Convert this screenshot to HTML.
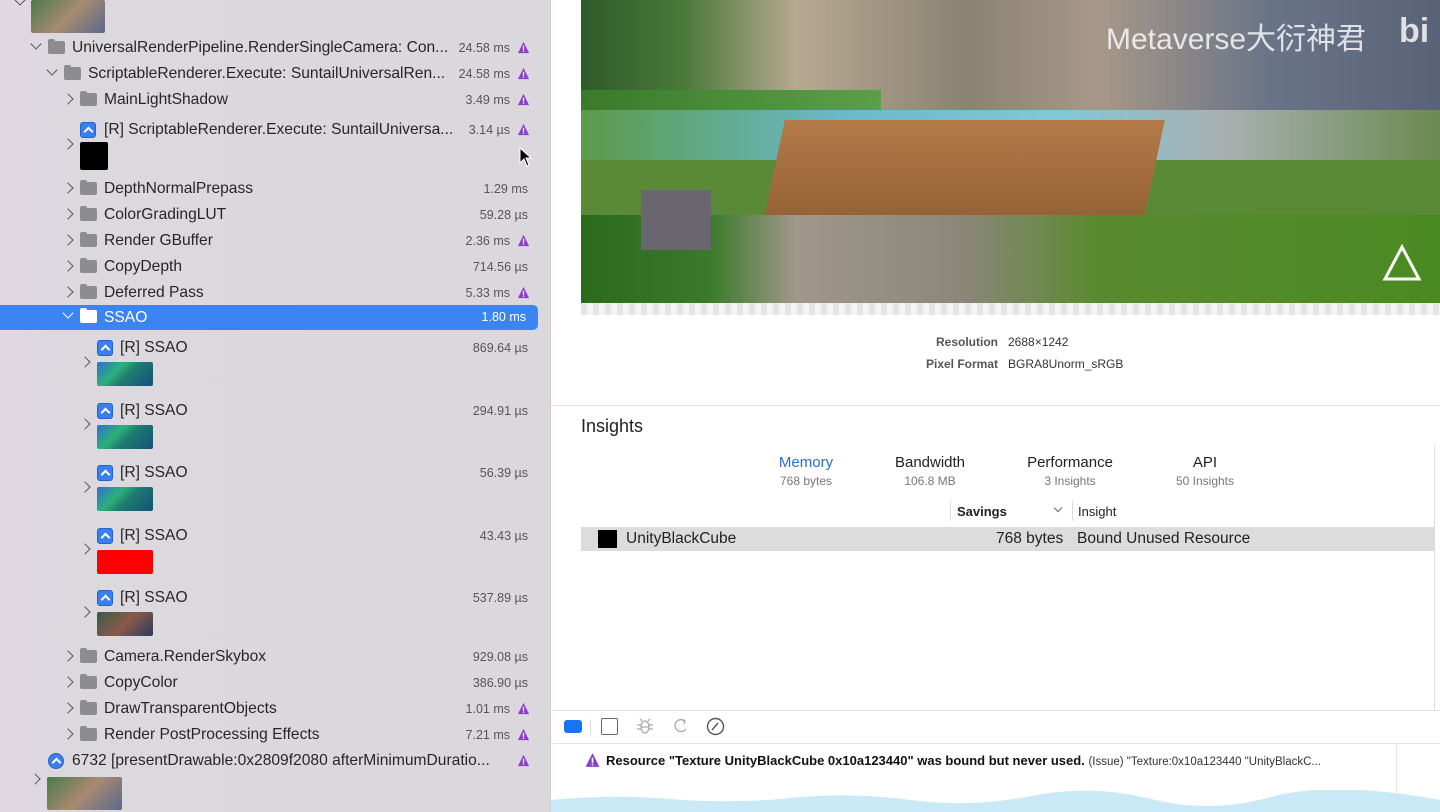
<!DOCTYPE html>
<html><head><meta charset="utf-8"><style>
*{margin:0;padding:0;box-sizing:border-box}
body{width:1440px;height:812px;overflow:hidden;position:relative;font-family:"Liberation Sans",sans-serif;background:#fff}
#side{position:absolute;left:0;top:0;width:551px;height:812px;background:linear-gradient(90deg,#e2d6e2 0px,#dcd9de 60px,#dad8dc 100%);border-right:1px solid #cfcdd1}
.r{position:absolute;left:0;height:24px;width:540px;font-size:15.6px;color:#262626;line-height:24px;white-space:nowrap;margin-top:1px}
.r .t{position:absolute;top:0}
.r .tm{position:absolute;font-size:12.5px;color:#555;right:30px;top:0}
.r .tm.nw{right:12px}
.w{position:absolute;right:10px;top:5px;width:13px;height:13px}
.ch{position:absolute;top:7px;width:8px;height:8px;border-right:1.6px solid #555;border-bottom:1.6px solid #555}
.ch.d{transform:rotate(45deg);top:4px}
.ch.rt{transform:rotate(-45deg)}
.fo{position:absolute;top:5px;width:17px;height:13px;background:#8d8c90;border-radius:2px}
.fo:before{content:"";position:absolute;left:0;top:-2px;width:7px;height:4px;background:#8d8c90;border-radius:2px 2px 0 0}
.ri{position:absolute;top:4px;width:16px;height:16px;background:#3a7ff0;border-radius:3px;border:1px solid #2762c9}
.ri:after{content:"";position:absolute;left:4px;top:5px;width:5px;height:5px;border-left:2px solid #fff;border-top:2px solid #fff;transform:rotate(45deg)}
.th{position:absolute;width:56px;height:24px;border-radius:2px}
.ssao{background:linear-gradient(135deg,#2f6fd0,#2db07a 35%,#1f7b6f 55%,#14507a)}
.sel{background:#3b84f2;color:#fff;border-radius:0 5px 5px 0}
.sel .tm{color:#fff}
.sel .ch{border-color:#fff}.sel .fo,.sel .fo:before{background:#fff}
#game{position:absolute;left:581px;top:0;width:859px;height:303px;background:#5a8a38;overflow:hidden}
#chk{position:absolute;left:581px;top:303px;width:859px;height:12px;background:repeating-linear-gradient(90deg,#e4e4e4 0 6px,#f4f4f4 6px 12px)}
.lbl{position:absolute;font-size:12px;color:#333}
</style></head><body>
<div id="side">
<div class="th" style="left:31px;top:0;width:74px;height:33px;background:linear-gradient(135deg,#4a7a4a,#a88a70 50%,#5b6a8a)"></div>
<div class="ch d" style="left:16px;top:-4px;position:absolute"></div>

<div class="r" style="top:35px"><span class="ch d" style="left:32px"></span><span class="fo" style="left:48px"></span><span class="t" style="left:72px">UniversalRenderPipeline.RenderSingleCamera: Con...</span><span class="tm">24.58 ms</span><svg class="w" viewBox="0 0 14 14"><path d="M7 1L13 13H1Z" fill="#8b3fc4"/><rect x="6.3" y="5" width="1.4" height="4.5" fill="#fff"/><rect x="6.3" y="10.3" width="1.4" height="1.4" fill="#fff"/></svg></div>
<div class="r" style="top:61px"><span class="ch d" style="left:48px"></span><span class="fo" style="left:64px"></span><span class="t" style="left:88px">ScriptableRenderer.Execute: SuntailUniversalRen...</span><span class="tm">24.58 ms</span><svg class="w" viewBox="0 0 14 14"><path d="M7 1L13 13H1Z" fill="#8b3fc4"/><rect x="6.3" y="5" width="1.4" height="4.5" fill="#fff"/><rect x="6.3" y="10.3" width="1.4" height="1.4" fill="#fff"/></svg></div>
<div class="r" style="top:87px"><span class="ch rt" style="left:64px"></span><span class="fo" style="left:80px"></span><span class="t" style="left:104px">MainLightShadow</span><span class="tm">3.49 ms</span><svg class="w" viewBox="0 0 14 14"><path d="M7 1L13 13H1Z" fill="#8b3fc4"/><rect x="6.3" y="5" width="1.4" height="4.5" fill="#fff"/><rect x="6.3" y="10.3" width="1.4" height="1.4" fill="#fff"/></svg></div>
<div class="r" style="top:117px"><span class="ri" style="left:80px"></span><span class="t" style="left:104px">[R] ScriptableRenderer.Execute: SuntailUniversa...</span><span class="tm">3.14 µs</span><svg class="w" viewBox="0 0 14 14"><path d="M7 1L13 13H1Z" fill="#8b3fc4"/><rect x="6.3" y="5" width="1.4" height="4.5" fill="#fff"/><rect x="6.3" y="10.3" width="1.4" height="1.4" fill="#fff"/></svg></div>
<div class="ch rt" style="position:absolute;left:64px;top:140px"></div>
<div class="th" style="left:80px;top:142px;width:28px;height:28px;background:#000"></div>
<svg style="position:absolute;left:519px;top:147px" width="14" height="20" viewBox="0 0 14 20"><path d="M1 1V16L5 12L8 19L10 18L7 11H12Z" fill="#000" stroke="#fff" stroke-width="1"/></svg>

<div class="r" style="top:176px"><span class="ch rt" style="left:64px"></span><span class="fo" style="left:80px"></span><span class="t" style="left:104px">DepthNormalPrepass</span><span class="tm nw">1.29 ms</span></div>
<div class="r" style="top:202px"><span class="ch rt" style="left:64px"></span><span class="fo" style="left:80px"></span><span class="t" style="left:104px">ColorGradingLUT</span><span class="tm nw">59.28 µs</span></div>
<div class="r" style="top:228px"><span class="ch rt" style="left:64px"></span><span class="fo" style="left:80px"></span><span class="t" style="left:104px">Render GBuffer</span><span class="tm">2.36 ms</span><svg class="w" viewBox="0 0 14 14"><path d="M7 1L13 13H1Z" fill="#8b3fc4"/><rect x="6.3" y="5" width="1.4" height="4.5" fill="#fff"/><rect x="6.3" y="10.3" width="1.4" height="1.4" fill="#fff"/></svg></div>
<div class="r" style="top:254px"><span class="ch rt" style="left:64px"></span><span class="fo" style="left:80px"></span><span class="t" style="left:104px">CopyDepth</span><span class="tm nw">714.56 µs</span></div>
<div class="r" style="top:280px"><span class="ch rt" style="left:64px"></span><span class="fo" style="left:80px"></span><span class="t" style="left:104px">Deferred Pass</span><span class="tm">5.33 ms</span><svg class="w" viewBox="0 0 14 14"><path d="M7 1L13 13H1Z" fill="#8b3fc4"/><rect x="6.3" y="5" width="1.4" height="4.5" fill="#fff"/><rect x="6.3" y="10.3" width="1.4" height="1.4" fill="#fff"/></svg></div>
<div class="r sel" style="top:305px;height:25px;width:538px;line-height:25px;margin-top:0"><span class="ch d" style="left:64px"></span><span class="fo" style="left:80px"></span><span class="t" style="left:104px">SSAO</span><span class="tm nw">1.80 ms</span></div>

<div class="r" style="top:335px"><span class="ri" style="left:97px"></span><span class="t" style="left:120px">[R] SSAO</span><span class="tm nw">869.64 µs</span></div>
<div class="ch rt" style="position:absolute;left:81px;top:358px"></div><div class="th ssao" style="left:97px;top:362px"></div>
<div class="r" style="top:398px"><span class="ri" style="left:97px"></span><span class="t" style="left:120px">[R] SSAO</span><span class="tm nw">294.91 µs</span></div>
<div class="ch rt" style="position:absolute;left:81px;top:420px"></div><div class="th ssao" style="left:97px;top:425px"></div>
<div class="r" style="top:460px"><span class="ri" style="left:97px"></span><span class="t" style="left:120px">[R] SSAO</span><span class="tm nw">56.39 µs</span></div>
<div class="ch rt" style="position:absolute;left:81px;top:483px"></div><div class="th ssao" style="left:97px;top:487px"></div>
<div class="r" style="top:523px"><span class="ri" style="left:97px"></span><span class="t" style="left:120px">[R] SSAO</span><span class="tm nw">43.43 µs</span></div>
<div class="ch rt" style="position:absolute;left:81px;top:545px"></div><div class="th" style="left:97px;top:550px;background:#f00"></div>
<div class="r" style="top:585px"><span class="ri" style="left:97px"></span><span class="t" style="left:120px">[R] SSAO</span><span class="tm nw">537.89 µs</span></div>
<div class="ch rt" style="position:absolute;left:81px;top:608px"></div><div class="th" style="left:97px;top:612px;background:linear-gradient(135deg,#3a5a4a,#8a5a4a 50%,#2a3a5a)"></div>

<div class="r" style="top:644px"><span class="ch rt" style="left:64px"></span><span class="fo" style="left:80px"></span><span class="t" style="left:104px">Camera.RenderSkybox</span><span class="tm nw">929.08 µs</span></div>
<div class="r" style="top:670px"><span class="ch rt" style="left:64px"></span><span class="fo" style="left:80px"></span><span class="t" style="left:104px">CopyColor</span><span class="tm nw">386.90 µs</span></div>
<div class="r" style="top:696px"><span class="ch rt" style="left:64px"></span><span class="fo" style="left:80px"></span><span class="t" style="left:104px">DrawTransparentObjects</span><span class="tm">1.01 ms</span><svg class="w" viewBox="0 0 14 14"><path d="M7 1L13 13H1Z" fill="#8b3fc4"/><rect x="6.3" y="5" width="1.4" height="4.5" fill="#fff"/><rect x="6.3" y="10.3" width="1.4" height="1.4" fill="#fff"/></svg></div>
<div class="r" style="top:722px"><span class="ch rt" style="left:64px"></span><span class="fo" style="left:80px"></span><span class="t" style="left:104px">Render PostProcessing Effects</span><span class="tm">7.21 ms</span><svg class="w" viewBox="0 0 14 14"><path d="M7 1L13 13H1Z" fill="#8b3fc4"/><rect x="6.3" y="5" width="1.4" height="4.5" fill="#fff"/><rect x="6.3" y="10.3" width="1.4" height="1.4" fill="#fff"/></svg></div>
<div class="r" style="top:748px"><span class="ri" style="left:48px;border-radius:50%"></span><span class="t" style="left:72px">6732 [presentDrawable:0x2809f2080 afterMinimumDuratio...</span><svg class="w" viewBox="0 0 14 14"><path d="M7 1L13 13H1Z" fill="#8b3fc4"/><rect x="6.3" y="5" width="1.4" height="4.5" fill="#fff"/><rect x="6.3" y="10.3" width="1.4" height="1.4" fill="#fff"/></svg></div>
<div class="ch rt" style="position:absolute;left:31px;top:775px"></div>
<div class="th" style="left:47px;top:777px;width:75px;height:33px;background:linear-gradient(135deg,#4a7a4a,#a88a70 50%,#5b6a8a)"></div>
</div>

<div id="game">
<div style="position:absolute;left:0;top:0;width:859px;height:120px;background:linear-gradient(90deg,#2f5a2a 0%,#4a7a3a 12%,#b7a890 25%,#8a8272 45%,#a89888 60%,#6a7488 80%,#5a6278)"></div>
<div style="position:absolute;left:0;top:90px;width:300px;height:60px;background:linear-gradient(90deg,#3a7a2a,#5aa04a)"></div>
<div style="position:absolute;left:0;top:110px;width:859px;height:50px;background:linear-gradient(90deg,#5a9a4a,#6ab8c8 30%,#80c8d8 55%,#a8b0b0 75%,#6a8a50)"></div>
<div style="position:absolute;left:190px;top:120px;width:380px;height:130px;background:linear-gradient(180deg,#b47a48,#8a5a32);transform:skewX(-12deg)"></div>
<div style="position:absolute;left:0;top:215px;width:859px;height:88px;background:linear-gradient(90deg,#2a6a1a,#3a7a2a 15%,#a0988a 25%,#8a8678 45%,#5a8a30 60%,#4a8a22)"></div>
<div style="position:absolute;left:60px;top:190px;width:70px;height:60px;background:#6a6670"></div>
<div style="position:absolute;left:525px;top:14px;font-size:30px;color:rgba(255,255,255,.8);font-family:'Liberation Sans','Noto Sans CJK SC',sans-serif">Metaverse大衍神君</div>
<div style="position:absolute;left:818px;top:12px;font-size:34px;font-weight:bold;color:rgba(255,255,255,.8)">bi</div>
<svg style="position:absolute;left:800px;top:243px" width="42" height="40" viewBox="0 0 42 40" fill="none" stroke="#fff" stroke-width="3"><path d="M21 4L38 36H4Z"/></svg>
</div>
<div id="chk"></div>

<div class="lbl" style="left:936px;top:335px;color:#555;font-weight:bold">Resolution</div>
<div class="lbl" style="left:1008px;top:335px">2688×1242</div>
<div class="lbl" style="left:926px;top:357px;color:#555;font-weight:bold">Pixel Format</div>
<div class="lbl" style="left:1008px;top:357px">BGRA8Unorm_sRGB</div>
<div style="position:absolute;left:551px;top:405px;width:889px;height:1px;background:#e3e3e3"></div>
<div style="position:absolute;left:581px;top:416px;font-size:18px;color:#222">Insights</div>
<div style="position:absolute;left:1434px;top:446px;width:1px;height:264px;background:#ddd"></div>

<div style="position:absolute;left:766px;top:454px;width:80px;text-align:center;font-size:15px;color:#2a6fd0">Memory<div style="font-size:12px;color:#777;margin-top:3px">768 bytes</div></div>
<div style="position:absolute;left:880px;top:454px;width:100px;text-align:center;font-size:15px;color:#222">Bandwidth<div style="font-size:12px;color:#777;margin-top:3px">106.8 MB</div></div>
<div style="position:absolute;left:1015px;top:454px;width:110px;text-align:center;font-size:15px;color:#222">Performance<div style="font-size:12px;color:#777;margin-top:3px">3 Insights</div></div>
<div style="position:absolute;left:1165px;top:454px;width:80px;text-align:center;font-size:15px;color:#222">API<div style="font-size:12px;color:#777;margin-top:3px">50 Insights</div></div>

<div style="position:absolute;left:950px;top:501px;width:1px;height:20px;background:#ddd"></div>
<div style="position:absolute;left:957px;top:504px;font-size:13px;font-weight:bold;color:#222">Savings</div>
<div style="position:absolute;left:1055px;top:505px;width:6px;height:6px;border-right:1px solid #666;border-bottom:1px solid #666;transform:rotate(45deg)"></div>
<div style="position:absolute;left:1072px;top:501px;width:1px;height:20px;background:#ddd"></div>
<div style="position:absolute;left:1078px;top:504px;font-size:13px;color:#222">Insight</div>

<div style="position:absolute;left:581px;top:527px;width:854px;height:24px;background:#dcdcdc"></div>
<div style="position:absolute;left:598px;top:530px;width:19px;height:18px;background:#000"></div>
<div style="position:absolute;left:626px;top:530px;font-size:15.5px;color:#222">UnityBlackCube</div>
<div style="position:absolute;left:996px;top:530px;font-size:15.5px;color:#222">768 bytes</div>
<div style="position:absolute;left:1077px;top:530px;font-size:15.5px;color:#222">Bound Unused Resource</div>

<div style="position:absolute;left:551px;top:710px;width:889px;height:1px;background:#e3e3e3"></div>
<div style="position:absolute;left:564px;top:720px;width:18px;height:13px;background:#1a73f0;border-radius:3px"></div>
<div style="position:absolute;left:590px;top:719px;width:1px;height:16px;background:#ddd"></div>
<div style="position:absolute;left:601px;top:718px;width:17px;height:17px;border:1.5px solid #666;border-radius:2px"></div>
<svg style="position:absolute;left:636px;top:717px" width="18" height="18" viewBox="0 0 18 18" fill="none" stroke="#aaa" stroke-width="1.3"><ellipse cx="9" cy="10" rx="4" ry="6"/><path d="M5 8H1M13 8H17M5 12H1M13 12H17M6 4L4 2M12 4L14 2M5 10H13"/></svg>
<svg style="position:absolute;left:672px;top:717px" width="18" height="18" viewBox="0 0 18 18" fill="none" stroke="#aaa" stroke-width="1.3"><path d="M13 4A6 6 0 1 0 14 12"/><path d="M10 3L13 4L12 7"/></svg>
<svg style="position:absolute;left:706px;top:717px" width="19" height="19" viewBox="0 0 19 19" fill="none" stroke="#555" stroke-width="1.4"><circle cx="9.5" cy="9.5" r="8"/><path d="M6 13L12 6"/></svg>
<div style="position:absolute;left:551px;top:743px;width:889px;height:1px;background:#e3e3e3"></div>
<div style="position:absolute;left:1396px;top:744px;width:1px;height:68px;background:#e3e3e3"></div>
<svg style="position:absolute;left:584px;top:752px" width="17" height="16" viewBox="0 0 14 14"><path d="M7 1L13 13H1Z" fill="#8b3fc4"/><rect x="6.3" y="5" width="1.4" height="4.5" fill="#fff"/><rect x="6.3" y="10.3" width="1.4" height="1.4" fill="#fff"/></svg>
<div style="position:absolute;left:606px;top:753px;font-size:13px;color:#111;white-space:nowrap"><b>Resource "Texture UnityBlackCube 0x10a123440" was bound but never used.</b> <span style="font-size:11.5px;color:#333">(Issue) "Texture:0x10a123440 "UnityBlackC...</span></div>
<svg style="position:absolute;left:551px;top:790px" width="889" height="22" viewBox="0 0 889 22"><path d="M0 10Q60 4 120 9T240 8T360 10T480 6T600 9T720 7T889 10V22H0Z" fill="#c9e9f6"/></svg>
</body></html>
